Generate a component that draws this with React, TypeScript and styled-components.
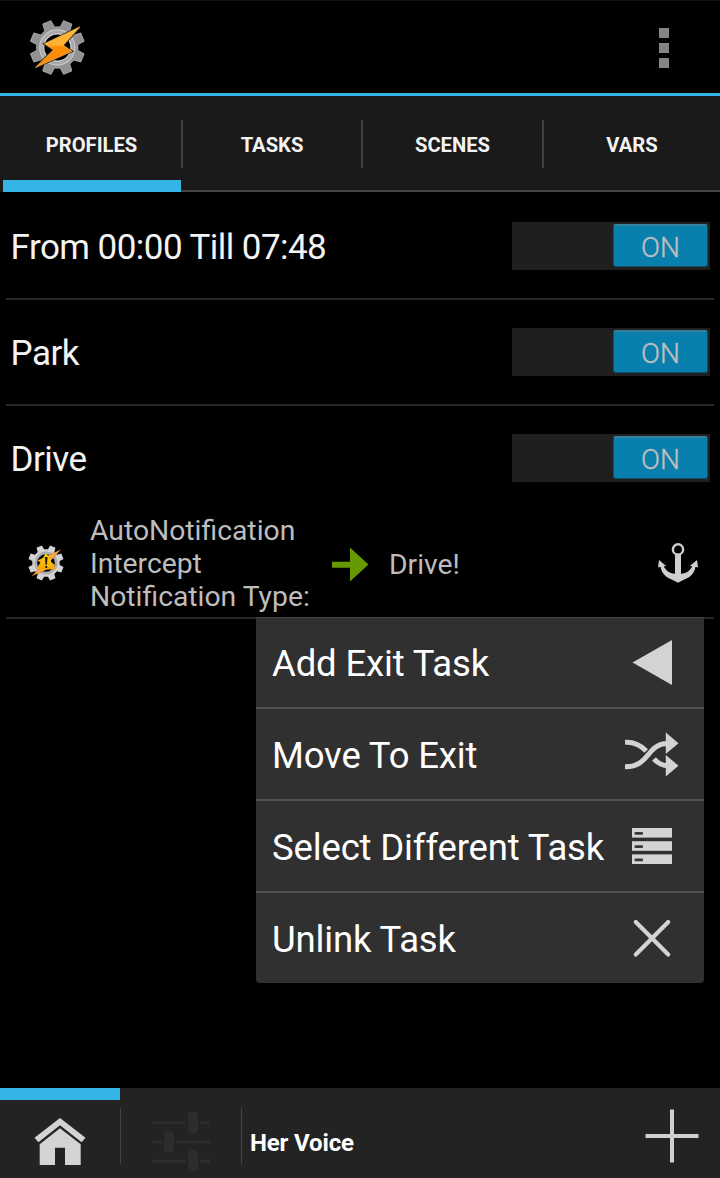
import React from "react";
import styled, { createGlobalStyle } from "styled-components";

const GlobalStyle = createGlobalStyle`
  *, *::before, *::after { box-sizing: border-box; }
  body { margin: 0; background: #000; font-family: Roboto, sans-serif; }
  svg { display: block; flex: none; }
`;

const Screen = styled.div`
  display: flex;
  flex-direction: column;
  width: 720px;
  height: 1178px;
  background: #000;
  color: #f3f3f3;
  overflow: hidden;
`;

const ActionBar = styled.header`
  display: flex;
  align-items: center;
  justify-content: space-between;
  height: 96px;
  padding: 0 51px 0 27px;
  border-top: 1px solid #111;
  border-bottom: 3px solid #33b5e5;
`;

const Overflow = styled.div`
  display: flex;
  flex-direction: column;
  gap: 5px;
  margin-top: 1px;
`;

const Dot = styled.span`
  width: 10px;
  height: 10px;
  background: #848484;
`;

const Tabs = styled.nav`
  display: grid;
  grid-template-columns: 181px 180px 181px 178px;
  height: 96px;
  background: #1a1a1a;
`;

const Tab = styled.div<{ $active?: boolean }>`
  display: flex;
  flex-direction: column;
  align-items: center;
  padding: 37px 0 0 2px;
  font-size: 20.2px;
  line-height: 24px;
  font-weight: 700;
  border-bottom: 2px solid #464646;
  background: linear-gradient(#424242, #424242) no-repeat 0 24px / 2px 48px;
  ${(p) =>
    p.$active &&
    `
    background: linear-gradient(#33b5e5, #33b5e5) no-repeat border-box 3px 84px / 178px 12px;
    border-bottom-color: transparent;
  `}
`;

const List = styled.main`
  display: flex;
  flex-direction: column;
  flex: 1;
  padding: 0 6px;
`;

const Profile = styled.section`
  border-bottom: 2px solid #272727;
`;

const ProfileHead = styled.div<{ $height: number; $top: number }>`
  display: flex;
  align-items: flex-start;
  justify-content: space-between;
  height: ${(p) => p.$height}px;
  padding: ${(p) => p.$top}px 4px 0 4.6px;
`;

const ProfileName = styled.h2`
  margin: 6px 0 0;
  font-size: 35px;
  line-height: 40px;
  font-weight: 400;
  letter-spacing: -0.55px;
`;

const Track = styled.div`
  display: flex;
  justify-content: flex-end;
  width: 198px;
  height: 48px;
  padding: 2px 2px 3px;
  background: #1f1f1f;
`;

const Thumb = styled.div`
  display: flex;
  align-items: center;
  justify-content: center;
  width: 95px;
  height: 43px;
  border: 1px solid #11506a;
  border-top: 2px solid #36809d;
  border-radius: 3px;
  background: #087fac;
  color: #bebebe;
  font-size: 28px;
  font-weight: 300;
  padding-top: 2px;
  -webkit-text-stroke: 0.4px #bebebe;
`;

const Detail = styled.div`
  display: flex;
  align-items: center;
  height: 107px;
  padding: 0 16px 0 20px;
  color: #bdbdbd;
  font-size: 28.3px;
  line-height: 33px;
`;

const Condition = styled.div`
  width: 242px;
  margin-left: 24px;
  white-space: nowrap;
`;

const TaskName = styled.div`
  flex: 1;
  margin-left: 20px;
  padding-top: 2px;
`;

const Raised = styled.div<{ $by: number }>`
  padding-bottom: ${(p) => p.$by * 2}px;
`;

const Anchored = styled.div`
  position: relative;
`;

const Menu = styled.div`
  position: absolute;
  top: -2px;
  left: 250px;
  width: 448px;
  height: 366px;
  background: #303030;
  border-top: 1px solid #474747;
  border-radius: 0 0 4px 4px;
`;

const MenuItem = styled.div`
  display: flex;
  align-items: center;
  justify-content: space-between;
  height: 92px;
  padding: 1px 21px 0 16px;
  border-bottom: 2px solid #505050;
  &:first-child { height: 91px; }
  &:last-child { height: 90px; border-bottom: 0; }
`;

const MenuLabel = styled.span`
  padding-top: 2px;
  color: #fff;
  font-size: 36.5px;
  line-height: 44px;
  white-space: nowrap;
  letter-spacing: -0.15px;
`;

const BottomBar = styled.footer`
  display: flex;
  height: 90px;
  background: #232323;
`;

const HomeTab = styled.div`
  width: 120px;
  border-top: 12px solid #33b5e5;
  padding: 17px 0 0 33px;
`;

const ProjectTab = styled.div<{ $width?: number }>`
  width: ${(p) => (p.$width ? `${p.$width}px` : "auto")};
  flex: ${(p) => (p.$width ? "none" : 1)};
  background: linear-gradient(#444, #444) no-repeat 0 20px / 1px 56px;
`;

const SlidersSlot = styled.div`
  padding: 22px 0 0 31px;
`;

const ProjectName = styled.div`
  padding: 40px 0 0 9px;
  color: #fff;
  font-size: 24px;
  line-height: 30px;
  font-weight: 700;
  letter-spacing: -0.15px;
`;

const AddSlot = styled.div`
  padding: 20px 20px 0 0;
`;

function gearPath(outer: number, root: number) {
  const pts: string[] = [];
  const at = (r: number, deg: number) => {
    const a = (deg * Math.PI) / 180;
    pts.push(`${(r * Math.cos(a)).toFixed(2)} ${(r * Math.sin(a)).toFixed(2)}`);
  };
  for (let i = 0; i < 8; i++) {
    const c = 22.5 + i * 45;
    at(root, c - 14.5);
    at(outer, c - 9.3);
    at(outer, c + 9.3);
    at(root, c + 14.5);
  }
  return `M${pts.join("L")}Z`;
}

const BOLT = "M22.5-20.5L-13-3.7L-3.7 2.3L-21.8 20L14.7 3.8L6-2.2Z";

const AppLogo = () => (
  <svg width="60" height="60" viewBox="-30.3 -30.5 60 60">
    <defs>
      <linearGradient id="bolt" x1="0" y1="0" x2="0" y2="1">
        <stop offset="0" stopColor="#ffb938" />
        <stop offset="0.44" stopColor="#ffb02e" />
        <stop offset="0.5" stopColor="#ff8d07" />
        <stop offset="1" stopColor="#ff8a08" />
      </linearGradient>
    </defs>
    <path d={gearPath(27.6, 20.8)} fill="#929292" stroke="#b9b9b9" strokeWidth="0.8" />
    <circle r="17.6" fill="#a9a9a9" stroke="#c8c8c8" strokeWidth="1.2" />
    <circle r="13.6" fill="#000" stroke="#d0d0d0" strokeWidth="1.2" />
    <path d={BOLT} fill="url(#bolt)" stroke="#2b1c08" strokeWidth="2" paintOrder="stroke" />
    <path d={BOLT} fill="none" stroke="#ffce78" strokeWidth="0.5" />
  </svg>
);

const PluginIcon = () => (
  <svg width="40" height="40" viewBox="-20 -20 40 40">
    <defs>
      <linearGradient id="warning" x1="0" y1="0" x2="0" y2="1">
        <stop offset="0" stopColor="#ffdc00" />
        <stop offset="1" stopColor="#f9a80c" />
      </linearGradient>
    </defs>
    <path d={gearPath(18, 13.8)} fill="#d2d2d2" />
    <circle r="11" fill="#bcbcbc" stroke="#a4a4a4" strokeWidth="1" />
    <circle r="9" fill="#000" stroke="#777" strokeWidth="0.7" />
    <path d={BOLT} transform="scale(.65)" fill="#ffa63a" stroke="#5a3a10" strokeWidth="0.8" paintOrder="stroke" />
    <path d="M0-8L7.8 5.4H-7.8Z" fill="url(#warning)" stroke="url(#warning)" strokeWidth="2.2" strokeLinejoin="round" />
    <path d="M-1.2-6H1.6L.9 1.8H-.5ZM-.8 3H1.2V5H-.8Z" fill="#2a1d00" />
  </svg>
);

const GreenArrow = () => (
  <svg width="37" height="36" viewBox="0 0 37 36">
    <path d="M0 15.7H18V1.5L36.5 18.5L18 35.5V21.7H0Z" fill="#669900" />
  </svg>
);

const AnchorIcon = () => (
  <svg width="40" height="40" viewBox="0 0 40 40" fill="#cfcfcf">
    <circle cx="20" cy="6.4" r="5.1" fill="none" stroke="#cfcfcf" strokeWidth="2.4" />
    <path d="M17 11H23V30.7C26 30.7 28.3 29.9 30.3 28.3C32.2 26.8 33.6 25 34.2 23.3L31.8 23L39 17L40 24.3L37.4 23.9C36.6 28.5 34.6 31.5 31.3 33.9C28 36.2 22.5 37.7 20 39.8C17.5 37.7 12 36.2 8.7 33.9C5.4 31.5 3.4 28.5 2.6 23.9L0 24.3L1 17L8.2 23L5.8 23.3C6.4 25 7.8 26.8 9.7 28.3C11.7 29.9 14 30.7 17 30.7Z" />
  </svg>
);

const BackTriangle = () => (
  <svg width="62" height="60" viewBox="0 0 62 60">
    <path d="M11.5 29.5L51 7V52Z" fill="#d3d3d3" />
  </svg>
);

const ShuffleIcon = () => (
  <svg width="62" height="60" viewBox="0 0 62 60">
    <g fill="none" stroke="#d3d3d3" strokeWidth="5">
      <path d="M4 17.3C13 16.8 19.5 20 25.2 26" />
      <path d="M33 33.8C37 38.5 41 40.3 46 40.8" />
      <path d="M4 41.8C28 42.5 26 18.8 46 18.5" />
    </g>
    <path d="M44.8 7.5L57.5 18.3L44.8 29ZM44.8 30L57.5 40.7L44.8 51.5Z" fill="#d3d3d3" />
  </svg>
);

const ServerIcon = () => (
  <svg width="62" height="60" viewBox="0 0 62 60">
    {[11, 24.2, 37.4].map((y) => (
      <g key={y}>
        <rect x="11" y={y} width="40" height="9.6" fill="#d3d3d3" />
        <rect x="13.5" y={y + 4} width="8.5" height="2.8" rx="1" fill="#383838" />
      </g>
    ))}
  </svg>
);

const CrossIcon = () => (
  <svg width="62" height="60" viewBox="0 0 62 60">
    <path d="M14.8 13L47.2 45.4M47.2 13L14.8 45.4" stroke="#d3d3d3" strokeWidth="4.2" strokeLinecap="round" />
  </svg>
);

const HomeIcon = () => (
  <svg width="54" height="50" viewBox="0 0 54 50" fill="#d3d3d3">
    <path d="M27 1L52.5 20.7L48.6 25.2L27 8.2L5.4 25.2L1.5 20.7Z" />
    <path d="M27 11.3L47.7 27.2V48H32V30.7H22V48H6.7V27.2Z" />
  </svg>
);

const SlidersIcon = () => (
  <svg width="60" height="62" viewBox="0 0 60 62" fill="#2d2d2d">
    <path d="M1 11.2h34v3H1zM49 11.2h10v3H49zM1 30.4h10v3H1zM25 30.4h34v3H25zM1 49.8h34v3H1zM49 49.8h10v3H49z" />
    <rect x="37" y="2" width="10" height="21" rx="4" />
    <rect x="13" y="21.3" width="10" height="21" rx="4" />
    <rect x="37" y="40.3" width="10" height="21" rx="4" />
  </svg>
);

const PlusIcon = () => (
  <svg width="56" height="56" viewBox="0 0 56 56">
    <path d="M28 1.5V54.5M1.5 28H54.5" stroke="#d0d0d0" strokeWidth="4" />
  </svg>
);

const Toggle = () => (
  <Track>
    <Thumb>ON</Thumb>
  </Track>
);

const MENU = [
  { label: "Add Exit Task", Icon: BackTriangle },
  { label: "Move To Exit", Icon: ShuffleIcon },
  { label: "Select Different Task", Icon: ServerIcon },
  { label: "Unlink Task", Icon: CrossIcon },
];

export default function App() {
  return (
    <Screen>
      <GlobalStyle />
      <ActionBar>
        <AppLogo />
        <Overflow>
          <Dot />
          <Dot />
          <Dot />
        </Overflow>
      </ActionBar>
      <Tabs>
        <Tab $active>PROFILES</Tab>
        <Tab>TASKS</Tab>
        <Tab>SCENES</Tab>
        <Tab>VARS</Tab>
      </Tabs>
      <List>
        <Profile>
          <ProfileHead $height={106} $top={30}>
            <ProfileName>From 00:00 Till 07:48</ProfileName>
            <Toggle />
          </ProfileHead>
        </Profile>
        <Profile>
          <ProfileHead $height={104} $top={28}>
            <ProfileName>Park</ProfileName>
            <Toggle />
          </ProfileHead>
        </Profile>
        <Profile>
          <ProfileHead $height={104} $top={28}>
            <ProfileName>Drive</ProfileName>
            <Toggle />
          </ProfileHead>
          <Detail>
            <Raised $by={1}>
              <PluginIcon />
            </Raised>
            <Condition>
              <div>AutoNotification</div>
              <div>Intercept</div>
              <div>Notification Type:</div>
            </Condition>
            <GreenArrow />
            <TaskName>Drive!</TaskName>
            <Raised $by={1}>
              <AnchorIcon />
            </Raised>
          </Detail>
        </Profile>
        <Anchored>
          <Menu>
            {MENU.map(({ label, Icon }) => (
              <MenuItem key={label}>
                <MenuLabel>{label}</MenuLabel>
                <Icon />
              </MenuItem>
            ))}
          </Menu>
        </Anchored>
      </List>
      <BottomBar>
        <HomeTab>
          <HomeIcon />
        </HomeTab>
        <ProjectTab $width={121}>
          <SlidersSlot>
            <SlidersIcon />
          </SlidersSlot>
        </ProjectTab>
        <ProjectTab>
          <ProjectName>Her Voice</ProjectName>
        </ProjectTab>
        <AddSlot>
          <PlusIcon />
        </AddSlot>
      </BottomBar>
    </Screen>
  );
}
